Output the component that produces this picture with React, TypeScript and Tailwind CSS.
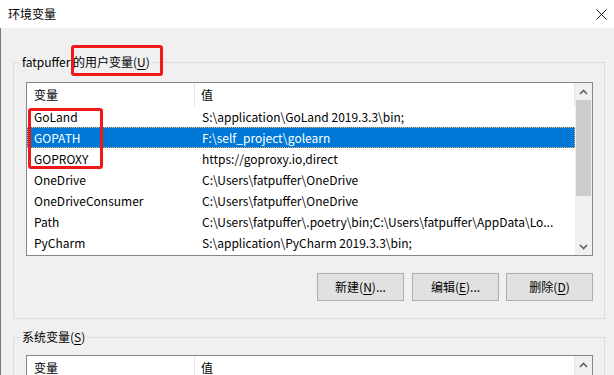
import React from 'react';

const font = { fontFamily: '"Noto Sans CJK SC", "Noto Sans", sans-serif' };

interface EnvVar {
  name: string;
  value: string;
}

const userVars: EnvVar[] = [
  { name: 'GoLand', value: 'S:\\application\\GoLand 2019.3.3\\bin;' },
  { name: 'GOPATH', value: 'F:\\self_project\\golearn' },
  { name: 'GOPROXY', value: 'https://goproxy.io,direct' },
  { name: 'OneDrive', value: 'C:\\Users\\fatpuffer\\OneDrive' },
  { name: 'OneDriveConsumer', value: 'C:\\Users\\fatpuffer\\OneDrive' },
  { name: 'Path', value: 'C:\\Users\\fatpuffer\\.poetry\\bin;C:\\Users\\fatpuffer\\AppData\\Lo...' },
  { name: 'PyCharm', value: 'S:\\application\\PyCharm 2019.3.3\\bin;' },
];

const Chevron: React.FC<{ down?: boolean }> = ({ down }) => (
  <svg width="9" height="6" viewBox="0 0 9 6">
    <path
      d={down ? 'M1 1 L4.5 4.5 L8 1' : 'M1 5 L4.5 1.5 L8 5'}
      fill="none"
      stroke="#606060"
      strokeWidth="1.6"
    />
  </svg>
);

const Accel: React.FC<{ text: string; k: string; tail?: string }> = ({ text, k, tail = '' }) => (
  <span>
    {text}(<span className="underline underline-offset-2">{k}</span>){tail}
  </span>
);

const ListHeader: React.FC = () => (
  <div className="flex h-[23px] items-center bg-white">
    <div className="w-[168px] pl-[7px] border-r border-[#e5e5e5] h-full flex items-center">变量</div>
    <div className="flex-1 pl-[6px] h-full flex items-center border-r border-[#e5e5e5]">值</div>
  </div>
);

const Scrollbar: React.FC<{ thumb?: boolean }> = ({ thumb }) => (
  <div className="w-[17px] bg-[#f0f0f0] flex flex-col shrink-0">
    <div className="h-[17px] flex items-center justify-center">
      <Chevron />
    </div>
    <div className="flex-1 px-[1px] flex flex-col">
      {thumb && <div className="h-[96px] bg-[#cdcdcd]" />}
    </div>
    {thumb && (
      <div className="h-[17px] flex items-center justify-center">
        <Chevron down />
      </div>
    )}
  </div>
);

export default function App() {
  return (
    <div className="relative w-[614px] h-[375px] overflow-hidden bg-[#f0f0f0] text-[12px] text-black flex flex-col" style={font}>
      {/* Title bar */}
      <div className="h-[28px] bg-white flex items-center justify-between shrink-0">
        <span className="pl-[8px] leading-none">环境变量</span>
        <svg width="11" height="11" viewBox="0 0 11 11" className="mr-[7px]">
          <path d="M0.5 0.5 L10.5 10.5 M10.5 0.5 L0.5 10.5" stroke="#1a1a1a" strokeWidth="1" />
        </svg>
      </div>

      <div className="flex-1 border-l border-[#7a7a7a] flex flex-col">
        {/* User vars */}
        <fieldset className="mt-[26px] ml-[12px] w-[592px] border border-[#dcdcdc] shrink-0">
          <legend className="ml-[6px] px-[2px] leading-[16px]">
            fatpuffer 的用户变量(<span className="underline underline-offset-2">U</span>)
          </legend>
          <div className="mt-[12px] ml-[12px] w-[567px] h-[174px] border border-[#828790] bg-white flex">
            <div className="flex-1 flex flex-col overflow-hidden">
              <ListHeader />
              {userVars.map((v) => {
                const sel = v.name === 'GOPATH';
                return (
                  <div
                    key={v.name}
                    className={
                      sel
                        ? 'flex h-[21px] items-center shrink-0 bg-[#0078d7] text-white border border-dotted border-[#f0b060]'
                        : 'flex h-[21px] items-center shrink-0 border border-transparent'
                    }
                  >
                    <div className="w-[167px] pl-[6px] whitespace-nowrap">{v.name}</div>
                    <div className="flex-1 pl-[7px] whitespace-nowrap overflow-hidden">{v.value}</div>
                  </div>
                );
              })}
            </div>
            <Scrollbar thumb />
          </div>
          <div className="flex justify-end mt-[17px] mb-[17px] mr-[11px]">
            <button className="w-[87px] h-[28px] bg-[#e1e1e1] border border-[#adadad]">
              <Accel text="新建" k="N" tail="..." />
            </button>
            <button className="w-[87px] h-[28px] ml-[8px] bg-[#e1e1e1] border border-[#adadad]">
              <Accel text="编辑" k="E" tail="..." />
            </button>
            <button className="w-[87px] h-[28px] ml-[7px] bg-[#e1e1e1] border border-[#adadad]">
              <Accel text="删除" k="D" />
            </button>
          </div>
        </fieldset>

        {/* System vars */}
        <fieldset className="mt-[10px] ml-[12px] w-[592px] border border-[#dcdcdc] shrink-0">
          <legend className="ml-[6px] px-[2px] leading-[16px]">
            <Accel text="系统变量" k="S" />
          </legend>
          <div className="mt-[10px] ml-[12px] w-[567px] h-[120px] border border-[#828790] bg-white flex">
            <div className="flex-1 flex flex-col overflow-hidden">
              <ListHeader />
            </div>
            <Scrollbar />
          </div>
        </fieldset>
      </div>

      {/* Red annotation boxes */}
      <div className="absolute left-[71px] top-[45px] w-[92px] h-[31px] border-[3px] border-[#f01818] rounded-[3px]" />
      <div className="absolute left-[28px] top-[108px] w-[75px] h-[61px] border-[3px] border-[#f01818] rounded-[3px]" />
    </div>
  );
}
